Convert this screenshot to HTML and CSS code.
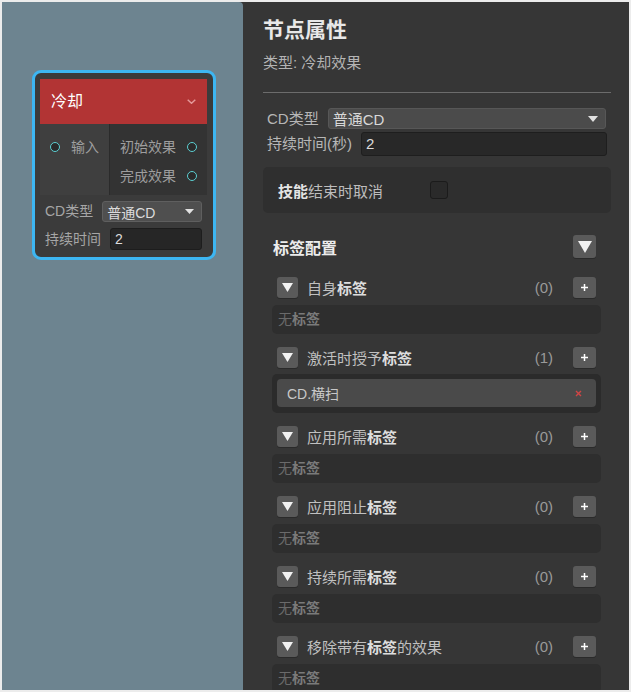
FILE: index.html
```html
<!DOCTYPE html>
<html lang="zh-CN">
<head>
<meta charset="utf-8">
<title>节点属性</title>
<link rel="stylesheet" href="styles.css">
</head>
<body>
<div class="app">
  <div class="canvas">
    <div class="node">
      <div class="node-header">
        <span class="node-title">冷却</span>
        <svg class="chev" width="9" height="5" viewBox="0 0 9 5"><path d="M0.7 0.7L4.5 4.3L8.3 0.7" stroke="#e59a9a" fill="none" stroke-width="1.4"/></svg>
      </div>
      <div class="ports">
        <div class="ports-in">
          <div class="port"><span class="dot"></span><span>输入</span></div>
        </div>
        <div class="ports-out">
          <div class="port out"><span>初始效果</span><span class="dot"></span></div>
          <div class="port out"><span>完成效果</span><span class="dot"></span></div>
        </div>
      </div>
      <div class="node-fields">
        <div class="nfield">
          <span class="nlabel">CD类型</span>
          <div class="nselect"><span>普通CD</span><svg width="9" height="5" viewBox="0 0 9 5"><path d="M0 0H9L4.5 5Z" fill="#e2e2e2"/></svg></div>
        </div>
        <div class="nfield">
          <span class="nlabel">持续时间</span>
          <div class="ninput">2</div>
        </div>
      </div>
    </div>
  </div>

  <div class="panel">
    <h1 class="title">节点属性</h1>
    <div class="subtitle">类型: 冷却效果</div>
    <div class="rule"></div>

    <div class="prow">
      <span class="plabel">CD类型</span>
      <div class="pselect"><span>普通CD</span><svg width="10" height="6" viewBox="0 0 10 6"><path d="M0 0H10L5 6Z" fill="#e2e2e2"/></svg></div>
    </div>
    <div class="prow tall">
      <span class="plabel">持续时间(秒)</span>
      <div class="pinput">2</div>
    </div>

    <div class="checkpanel">
      <span class="clabel"><b>技能</b>结束时取消</span>
      <span class="checkbox"></span>
    </div>

    <div class="tags">
      <div class="tags-head">
        <span class="tags-title">标签配置</span>
        <span class="btn big"><svg width="14" height="12" viewBox="0 0 14 12"><path d="M0 0H14L7 12Z" fill="#f2f2f2"/></svg></span>
      </div>

      <div class="sec-head first">
        <span class="btn tog"><svg width="11" height="9" viewBox="0 0 11 9"><path d="M0 0H11L5.5 9Z" fill="#f2f2f2"/></svg></span>
        <span class="sec-title">自身<b>标签</b></span>
        <span class="count">(0)</span>
        <span class="btn plus"><svg width="9" height="9" viewBox="0 0 9 9"><path d="M4.5 1V8M1 4.5H8" stroke="#fff" stroke-width="1.5"/></svg></span>
      </div>
      <div class="empty">无<b>标签</b></div>

      <div class="sec-head">
        <span class="btn tog"><svg width="11" height="9" viewBox="0 0 11 9"><path d="M0 0H11L5.5 9Z" fill="#f2f2f2"/></svg></span>
        <span class="sec-title">激活时授予<b>标签</b></span>
        <span class="count">(1)</span>
        <span class="btn plus"><svg width="9" height="9" viewBox="0 0 9 9"><path d="M4.5 1V8M1 4.5H8" stroke="#fff" stroke-width="1.5"/></svg></span>
      </div>
      <div class="list">
        <div class="chip"><span>CD.横扫</span><svg width="7" height="7" viewBox="0 0 7 7"><path d="M1 1L6 6M6 1L1 6" stroke="#d04545" stroke-width="1.4"/></svg></div>
      </div>

      <div class="sec-head">
        <span class="btn tog"><svg width="11" height="9" viewBox="0 0 11 9"><path d="M0 0H11L5.5 9Z" fill="#f2f2f2"/></svg></span>
        <span class="sec-title">应用所需<b>标签</b></span>
        <span class="count">(0)</span>
        <span class="btn plus"><svg width="9" height="9" viewBox="0 0 9 9"><path d="M4.5 1V8M1 4.5H8" stroke="#fff" stroke-width="1.5"/></svg></span>
      </div>
      <div class="empty">无<b>标签</b></div>

      <div class="sec-head">
        <span class="btn tog"><svg width="11" height="9" viewBox="0 0 11 9"><path d="M0 0H11L5.5 9Z" fill="#f2f2f2"/></svg></span>
        <span class="sec-title">应用阻止<b>标签</b></span>
        <span class="count">(0)</span>
        <span class="btn plus"><svg width="9" height="9" viewBox="0 0 9 9"><path d="M4.5 1V8M1 4.5H8" stroke="#fff" stroke-width="1.5"/></svg></span>
      </div>
      <div class="empty">无<b>标签</b></div>

      <div class="sec-head">
        <span class="btn tog"><svg width="11" height="9" viewBox="0 0 11 9"><path d="M0 0H11L5.5 9Z" fill="#f2f2f2"/></svg></span>
        <span class="sec-title">持续所需<b>标签</b></span>
        <span class="count">(0)</span>
        <span class="btn plus"><svg width="9" height="9" viewBox="0 0 9 9"><path d="M4.5 1V8M1 4.5H8" stroke="#fff" stroke-width="1.5"/></svg></span>
      </div>
      <div class="empty">无<b>标签</b></div>

      <div class="sec-head">
        <span class="btn tog"><svg width="11" height="9" viewBox="0 0 11 9"><path d="M0 0H11L5.5 9Z" fill="#f2f2f2"/></svg></span>
        <span class="sec-title">移除带有<b>标签</b>的效果</span>
        <span class="count">(0)</span>
        <span class="btn plus"><svg width="9" height="9" viewBox="0 0 9 9"><path d="M4.5 1V8M1 4.5H8" stroke="#fff" stroke-width="1.5"/></svg></span>
      </div>
      <div class="empty">无<b>标签</b></div>
    </div>
  </div>
</div>
</body>
</html>
```

FILE: styles.css
```css
* { box-sizing: border-box; }
html, body { margin: 0; padding: 0; }
body {
  width: 631px;
  height: 692px;
  overflow: hidden;
  background: #ececec;
  font-family: "Liberation Sans", "Noto Sans CJK SC", sans-serif;
}
.app {
  display: flex;
  margin: 2px;
  height: 688px;
  background: #363636;
  overflow: hidden;
}

/* ---------- canvas + node ---------- */
.canvas {
  position: relative;
  flex: none;
  width: 241px;
  background: #6d8490;
  border-top-right-radius: 4px;
}
.node {
  position: absolute;
  left: 30px;
  top: 68px;
  width: 184px;
  height: 190px;
  border: 3px solid #3db6f2;
  border-radius: 9px;
  background: #3b3b3b;
  padding: 6px 6px 7px 5px;
  display: flex;
  flex-direction: column;
}
.node-header {
  height: 45px;
  flex: none;
  background: #b23434;
  display: flex;
  align-items: center;
  justify-content: space-between;
  padding: 0 11px;
  color: #ffffff;
  font-size: 16px;
  line-height: 20px;
}
.ports {
  height: 71px;
  flex: none;
  display: flex;
  font-size: 14px;
  line-height: 18px;
  color: #9e9e9e;
}
.ports-in {
  width: 69px;
  background: #3f3f3f;
  padding-top: 8px;
}
.ports-out {
  flex: 1;
  background: #333333;
  border-left: 1px solid #2b2b2b;
  padding-top: 8px;
}
.port {
  height: 29px;
  display: flex;
  align-items: center;
  gap: 11px;
  padding-left: 10px;
}
.port.out {
  justify-content: flex-end;
  padding-left: 0;
  padding-right: 10px;
}
.dot {
  width: 10px;
  height: 10px;
  border-radius: 50%;
  border: 1.5px solid #5ccfd2;
  background: #2a2a2a;
  flex: none;
}
.node-fields {
  padding-top: 6px;
  display: flex;
  flex-direction: column;
  gap: 6px;
}
.nfield {
  display: flex;
  align-items: center;
  padding: 0 5px;
}
.nlabel {
  font-size: 14px;
  line-height: 21px;
  color: #a6a6a6;
  margin-right: 9px;
  white-space: nowrap;
}
.nselect {
  flex: 1;
  height: 21px;
  background: #4f4f4f;
  border: 1px solid #5f5f5f;
  border-radius: 3px;
  display: flex;
  align-items: center;
  justify-content: space-between;
  padding: 0 7px 0 4px;
  font-size: 14px;
  color: #dcdcdc;
}
.ninput {
  flex: 1;
  height: 22px;
  background: #262626;
  border: 1px solid #1d1d1d;
  border-radius: 3px;
  padding-left: 4px;
  font-size: 14px;
  line-height: 20px;
  color: #dcdcdc;
}

/* ---------- properties panel ---------- */
.panel {
  flex: 1;
  background: #363636;
  padding: 14px 18px 0 20px;
  overflow: hidden;
}
.title {
  margin: 0;
  font-size: 21px;
  line-height: 28px;
  font-weight: 700;
  color: #e8e8e8;
}
.subtitle {
  margin-top: 9px;
  font-size: 15px;
  line-height: 20px;
  color: #b4b4b4;
}
.rule {
  margin-top: 19px;
  height: 1px;
  background: #6c6c6c;
}
.prow {
  margin-top: 15px;
  height: 21px;
  display: flex;
  align-items: center;
  padding: 0 5px 0 4px;
}
.prow.tall {
  margin-top: 3px;
  height: 24px;
  padding-right: 4px;
}
.plabel {
  font-size: 15px;
  line-height: 20px;
  color: #b6b6b6;
  margin-right: 9px;
  white-space: nowrap;
}
.pselect {
  flex: 1;
  height: 21px;
  background: #4b4b4b;
  border: 1px solid #575757;
  border-radius: 3px;
  display: flex;
  align-items: center;
  justify-content: space-between;
  padding: 0 7px 0 4px;
  font-size: 15px;
  color: #d8d8d8;
}
.pinput {
  flex: 1;
  height: 24px;
  background: #282828;
  border: 1px solid #1e1e1e;
  border-radius: 3px;
  padding-left: 4px;
  font-size: 15px;
  line-height: 22px;
  color: #dcdcdc;
}
.checkpanel {
  margin-top: 11px;
  height: 46px;
  background: #2f2f2f;
  border-radius: 5px;
  display: flex;
  align-items: center;
  padding-left: 15px;
}
.clabel {
  width: 152px;
  font-size: 15px;
  color: #bdbdbd;
}
.clabel b { color: #e4e4e4; font-weight: 700; }
.checkbox {
  width: 18px;
  height: 18px;
  background: #2a2a2a;
  border: 1px solid #1b1b1b;
  border-radius: 3px;
}

/* ---------- tags ---------- */
.tags {
  margin: 22px 10px 0 9px;
}
.tags-head {
  height: 23px;
  display: flex;
  align-items: center;
  justify-content: space-between;
  padding: 0 5px 0 1px;
}
.tags-title {
  font-size: 16px;
  font-weight: 700;
  color: #ececec;
}
.btn {
  display: flex;
  align-items: center;
  justify-content: center;
  background: #5a5a5a;
  border-radius: 3px;
  box-shadow: 0 1px 0 #2a2a2a;
  flex: none;
}
.btn.big { width: 23px; height: 23px; }
.btn.tog { width: 21px; height: 21px; }
.btn.plus { width: 23px; height: 21px; }
.sec-head {
  margin-top: 13px;
  height: 21px;
  display: flex;
  align-items: center;
  padding: 0 5px;
}
.sec-head.first { margin-top: 19px; }
.sec-title {
  flex: 1;
  margin-left: 9px;
  font-size: 15px;
  color: #c0c0c0;
}
.sec-title b, .empty b { font-weight: 700; }
.sec-title b { color: #dedede; }
.count {
  margin-right: 20px;
  font-size: 15px;
  color: #9a9a9a;
}
.empty {
  margin-top: 7px;
  height: 29px;
  background: #2e2e2e;
  border-radius: 5px;
  padding-left: 6px;
  font-size: 14px;
  line-height: 29px;
  color: #6a6a6a;
}
.empty b { color: #7a7a7a; }
.list {
  margin-top: 6px;
  background: #2b2b2b;
  border-radius: 5px;
  padding: 5px 5px 6px;
}
.chip {
  height: 28px;
  background: #4a4a4a;
  border-radius: 4px;
  display: flex;
  align-items: center;
  justify-content: space-between;
  padding: 0 14px 0 10px;
  font-size: 14px;
  color: #c8c8c8;
}
```
